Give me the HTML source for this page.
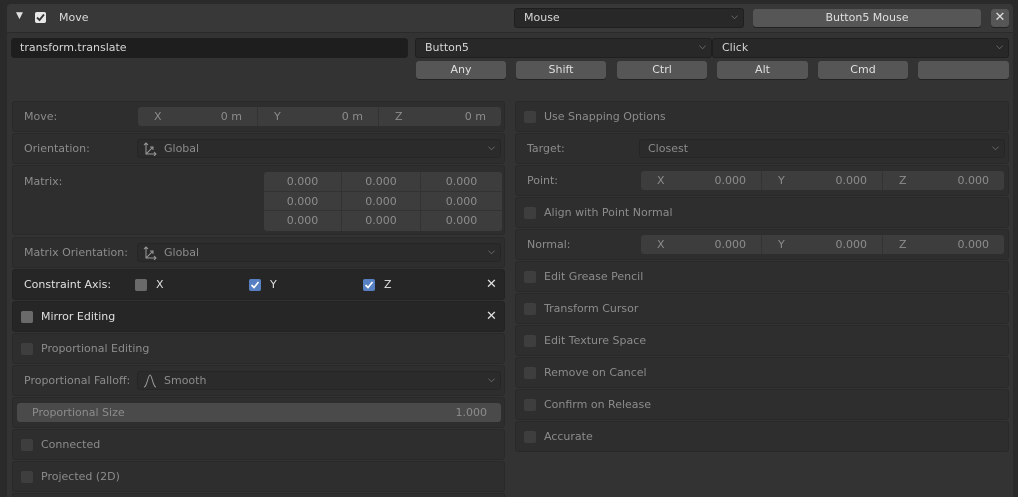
<!DOCTYPE html><html><head><meta charset="utf-8"><style>
*{box-sizing:border-box;margin:0;padding:0}
html,body{overflow:hidden}
body{width:1018px;height:497px;background:#2a2a2a;position:relative;overflow:hidden;font-family:"DejaVu Sans","Liberation Sans",sans-serif;font-size:11px;color:#8c8c8c}
.a{position:absolute}
.panel{left:7px;top:4px;width:1006px;height:493px;background:#333;border-radius:4px 4px 0 0}
.hdr{left:7px;top:4px;width:1006px;height:29px;background:#383838;border-bottom:1px solid #2a2a2a;border-radius:4px 4px 0 0}
.dd{background:#282828;border:1px solid #1f1f1f;border-radius:3px;color:#d8d8d8;padding-left:9px;line-height:17px}
.btn{background:#565656;border-radius:3px;color:#e0e0e0;text-align:center;line-height:18px;height:18px;box-shadow:0 1px 0 #222}
.row{background:#2e2e2e;border:1px solid #292929;border-radius:3px;height:31px}
.row.on{background:#262626;border-color:#222}
.lbl{line-height:30px;padding-left:11px}
.cb{width:12px;height:12px;background:#3e3e3e;border-radius:2px;top:9px;left:10px}
.cbt{left:28px;top:0;line-height:30px}
.t{top:0;line-height:30px}
.fld{background:#3d3d3d;border-radius:3px;height:19px;top:5px;color:#8c8c8c}
.seg{position:absolute;top:0;height:19px;line-height:19px;border-right:1px solid #333}
.seg .k{position:absolute;left:16px}
.seg .v{position:absolute;right:15px}
.chev{position:absolute;right:5px;top:0;color:#999;font-size:9px}
.dark{background:#2b2b2b;border:1px solid #262626;border-radius:3px;height:19px;top:5px;line-height:17px}
</style></head><body>
<div class="a panel"></div>
<div class="a hdr"></div>
<div class="a" style="left:16px;top:11px;color:#e0e0e0;font-size:9px">▼</div>
<div class="a" style="left:35px;top:12px;width:11px;height:11px;background:#e8e8e8;border-radius:2px"><svg width="11" height="11"><path d="M2 5.5 L4.5 8 L9 2.5" stroke="#333" stroke-width="1.8" fill="none"/></svg></div>
<div class="a" style="left:59px;top:11px;color:#ddd">Move</div>
<div class="a dd" style="left:514px;top:8px;width:230px;height:20px">Mouse<span class="chev">⌵</span></div>
<div class="a btn" style="left:753px;top:9px;width:228px">Button5 Mouse</div>
<div class="a btn" style="left:991px;top:9px;width:18px;line-height:17px;font-size:13px">✕</div>

<div class="a dd" style="left:11px;top:38px;width:397px;height:20px;background:#1e1e1e;padding-left:8px">transform.translate</div>
<div class="a dd" style="left:415px;top:38px;width:297px;height:20px">Button5<span class="chev">⌵</span></div>
<div class="a dd" style="left:712px;top:38px;width:297px;height:20px">Click<span class="chev">⌵</span></div>
<div class="a btn" style="left:416px;top:61px;width:90px">Any</div>
<div class="a btn" style="left:516px;top:61px;width:90px">Shift</div>
<div class="a btn" style="left:617px;top:61px;width:90px">Ctrl</div>
<div class="a btn" style="left:717px;top:61px;width:91px">Alt</div>
<div class="a btn" style="left:818px;top:61px;width:90px">Cmd</div>
<div class="a btn" style="left:918px;top:61px;width:91px"></div>

<!-- left column -->
<div class="a row" style="left:12px;top:101px;width:493px"><div class="lbl">Move:</div>
<div class="a fld" style="left:125px;width:363px"><div class="seg" style="left:0;width:120px"><span class="k">X</span><span class="v">0 m</span></div><div class="seg" style="left:120px;width:121px"><span class="k">Y</span><span class="v">0 m</span></div><div class="seg" style="left:241px;width:122px;border:0"><span class="k">Z</span><span class="v">0 m</span></div></div></div>
<div class="a row" style="left:12px;top:133px;width:493px"><div class="lbl">Orientation:</div>
<div class="a dark" style="left:124px;width:364px;padding-left:26px"><svg class="a" style="left:5px;top:2px" width="14" height="14"><path d="M3 1v11h10M1 3l2-2 2 2M11 10l2 2-2 2M3 12l7-7M7 5h3v3" stroke="#999" fill="none"/></svg>Global<span class="chev">⌵</span></div></div>
<div class="a row" style="left:12px;top:165px;width:493px;height:70px"><div class="a" style="left:11px;top:9px">Matrix:</div>
<div class="a" style="left:251px;top:6px;width:238px;height:59px;background:#3d3d3d;border-radius:3px">
<div style="display:grid;grid-template-columns:78px 79px 81px;grid-auto-rows:19.6px;text-align:center;line-height:19px">
<div style="border-right:1px solid #333;border-bottom:1px solid #333">0.000</div><div style="border-right:1px solid #333;border-bottom:1px solid #333">0.000</div><div style="border-bottom:1px solid #333">0.000</div>
<div style="border-right:1px solid #333;border-bottom:1px solid #333">0.000</div><div style="border-right:1px solid #333;border-bottom:1px solid #333">0.000</div><div style="border-bottom:1px solid #333">0.000</div>
<div style="border-right:1px solid #333">0.000</div><div style="border-right:1px solid #333">0.000</div><div>0.000</div></div></div></div>
<div class="a row" style="left:12px;top:237px;width:493px"><div class="lbl">Matrix Orientation:</div>
<div class="a dark" style="left:124px;width:364px;padding-left:26px"><svg class="a" style="left:5px;top:2px" width="14" height="14"><path d="M3 1v11h10M1 3l2-2 2 2M11 10l2 2-2 2M3 12l7-7M7 5h3v3" stroke="#999" fill="none"/></svg>Global<span class="chev">⌵</span></div></div>
<div class="a row on" style="left:12px;top:269px;width:493px;color:#e0e0e0"><div class="lbl">Constraint Axis:</div>
<div class="a cb" style="left:122px;background:#6a6a6a"></div><div class="a t" style="left:143px">X</div>
<div class="a cb" style="left:236px;background:#5680c2"><svg width="12" height="12"><path d="M2.5 6 L5 8.5 L9.5 3" stroke="#fff" stroke-width="1.6" fill="none"/></svg></div><div class="a t" style="left:257px">Y</div>
<div class="a cb" style="left:350px;background:#5680c2"><svg width="12" height="12"><path d="M2.5 6 L5 8.5 L9.5 3" stroke="#fff" stroke-width="1.6" fill="none"/></svg></div><div class="a t" style="left:371px">Z</div>
<div class="a t" style="left:473px;font-size:13px">✕</div></div>
<div class="a row on" style="left:12px;top:301px;width:493px;color:#e0e0e0"><div class="a cb" style="left:8px;background:#6a6a6a"></div><div class="a cbt">Mirror Editing</div><div class="a t" style="left:473px;font-size:13px">✕</div></div>
<div class="a row" style="left:12px;top:333px;width:493px"><div class="a cb" style="left:8px"></div><div class="a cbt">Proportional Editing</div></div>
<div class="a row" style="left:12px;top:365px;width:493px"><div class="lbl">Proportional Falloff:</div>
<div class="a dark" style="left:124px;width:364px;padding-left:26px"><svg class="a" style="left:5px;top:2px" width="14" height="14"><path d="M1 13 C4 13 5 1 7 1 S10 13 13 13" stroke="#999" fill="none"/></svg>Smooth<span class="chev">⌵</span></div></div>
<div class="a row" style="left:12px;top:397px;width:493px"><div class="a fld" style="left:4px;width:484px;background:#4a4a4a;line-height:19px;padding-left:15px">Proportional Size<span class="a" style="right:14px">1.000</span></div></div>
<div class="a row" style="left:12px;top:429px;width:493px"><div class="a cb" style="left:8px"></div><div class="a cbt">Connected</div></div>
<div class="a row" style="left:12px;top:461px;width:493px"><div class="a cb" style="left:8px"></div><div class="a cbt">Projected (2D)</div></div>
<div class="a" style="left:12px;top:493px;width:493px;height:4px;background:#2e2e2e;border:1px solid #292929;border-bottom:0"></div>

<!-- right column -->
<div class="a row" style="left:515px;top:101px;width:494px"><div class="a cb" style="left:8px"></div><div class="a cbt">Use Snapping Options</div></div>
<div class="a row" style="left:515px;top:133px;width:494px"><div class="lbl">Target:</div>
<div class="a dark" style="left:123px;width:366px;padding-left:8px">Closest<span class="chev">⌵</span></div></div>
<div class="a row" style="left:515px;top:165px;width:494px"><div class="lbl">Point:</div>
<div class="a fld" style="left:125px;width:363px"><div class="seg" style="left:0;width:121px"><span class="k">X</span><span class="v">0.000</span></div><div class="seg" style="left:121px;width:121px"><span class="k">Y</span><span class="v">0.000</span></div><div class="seg" style="left:242px;width:121px;border:0"><span class="k">Z</span><span class="v">0.000</span></div></div></div>
<div class="a row" style="left:515px;top:197px;width:494px"><div class="a cb" style="left:8px"></div><div class="a cbt">Align with Point Normal</div></div>
<div class="a row" style="left:515px;top:229px;width:494px"><div class="lbl">Normal:</div>
<div class="a fld" style="left:125px;width:363px"><div class="seg" style="left:0;width:121px"><span class="k">X</span><span class="v">0.000</span></div><div class="seg" style="left:121px;width:121px"><span class="k">Y</span><span class="v">0.000</span></div><div class="seg" style="left:242px;width:121px;border:0"><span class="k">Z</span><span class="v">0.000</span></div></div></div>
<div class="a row" style="left:515px;top:261px;width:494px"><div class="a cb" style="left:8px"></div><div class="a cbt">Edit Grease Pencil</div></div>
<div class="a row" style="left:515px;top:293px;width:494px"><div class="a cb" style="left:8px"></div><div class="a cbt">Transform Cursor</div></div>
<div class="a row" style="left:515px;top:325px;width:494px"><div class="a cb" style="left:8px"></div><div class="a cbt">Edit Texture Space</div></div>
<div class="a row" style="left:515px;top:357px;width:494px"><div class="a cb" style="left:8px"></div><div class="a cbt">Remove on Cancel</div></div>
<div class="a row" style="left:515px;top:389px;width:494px"><div class="a cb" style="left:8px"></div><div class="a cbt">Confirm on Release</div></div>
<div class="a row" style="left:515px;top:421px;width:494px"><div class="a cb" style="left:8px"></div><div class="a cbt">Accurate</div></div>
</body></html>
